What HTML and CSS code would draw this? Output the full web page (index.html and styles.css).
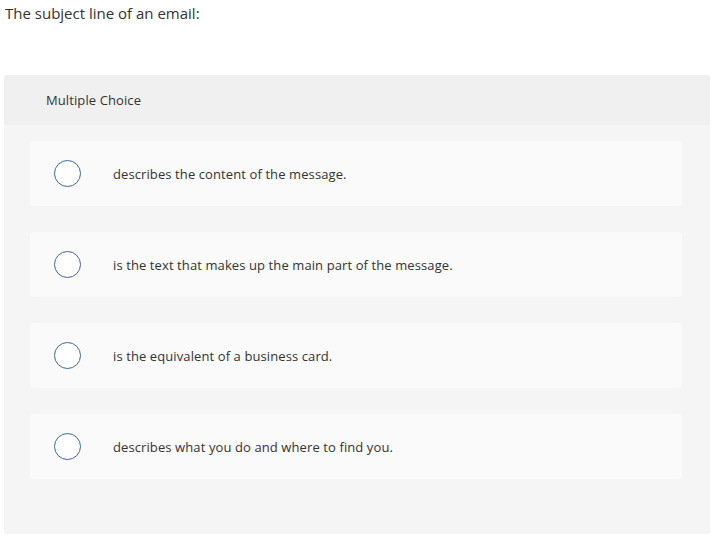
FILE: index.html
```html
<!DOCTYPE html>
<html>
<head>
<meta charset="utf-8">
<link rel="stylesheet" href="styles.css">
</head>
<body>
<p class="prompt">The subject line of an email:</p>
<div class="panel">
  <div class="panel-head">Multiple Choice</div>
  <div class="panel-body">
    <div class="option"><span class="radio"></span><span class="label">describes the content of the message.</span></div>
    <div class="option"><span class="radio"></span><span class="label">is the text that makes up the main part of the message.</span></div>
    <div class="option"><span class="radio"></span><span class="label">is the equivalent of a business card.</span></div>
    <div class="option"><span class="radio"></span><span class="label">describes what you do and where to find you.</span></div>
  </div>
</div>
</body>
</html>
```
FILE: styles.css
```css
html, body {
  margin: 0;
  padding: 0;
  background: #fff;
}
body {
  font-family: "Open Sans", Lato, sans-serif;
  color: #333;
  padding: 0 16px 0 4px;
}
.prompt {
  margin: 0;
  padding: 3px 0 0 1px;
  font-size: 15px;
  line-height: 20px;
  height: 75px;
  box-sizing: border-box;
}
.panel {
  width: 706px;
  border-radius: 3px;
  overflow: hidden;
  background: #f5f5f5;
}
.panel-head {
  height: 50px;
  background: #f0f0f0;
  display: flex;
  align-items: center;
  padding-left: 42px;
  font-size: 13px;
  letter-spacing: 0.1px;
}
.panel-body {
  padding: 16px 28px 55px 26px;
  display: flex;
  flex-direction: column;
  gap: 26px;
}
.option {
  height: 65px;
  background: #fafafa;
  border-radius: 3px;
  display: flex;
  align-items: center;
  padding-left: 24px;
}
.radio {
  width: 25px;
  height: 25px;
  border: 1.5px solid #3d6893;
  border-radius: 50%;
  background: #fff;
  flex: none;
}
.label {
  margin-left: 32px;
  font-size: 13px;
  letter-spacing: 0.1px;
}
```
